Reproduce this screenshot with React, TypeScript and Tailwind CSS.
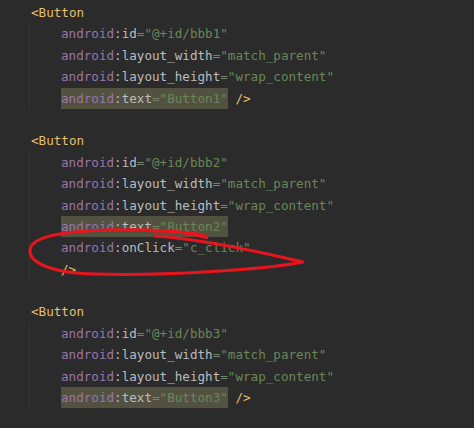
import React from "react";

type Attr = { name: string; value?: string; mark?: boolean; close?: "inline" | "next" };

const mono = { fontFamily: '"DejaVu Sans Mono", "Liberation Mono", monospace' };

function AttrLine({ a }: { a: Attr }) {
    const body = (
        <>
            <span className="text-[#9876aa]">android</span>
            <span className="text-[#b9bcc0]">:{a.name}</span>
            <span className="text-[#76866c]">=</span>
            <span className="text-[#6a8759]">"{a.value}"</span>
        </>
    );
    return (
        <div className="h-[21.4px] leading-[21.4px] whitespace-pre">
            {a.mark ? <span className="inline-block bg-[#535240] h-[21.4px]">{body}</span> : body}
            {a.close === "inline" && <span className="text-[#e8bf6a]"> /&gt;</span>}
        </div>
    );
}

function Block({ id, n, onClick }: { id: string; n: number; onClick?: boolean }) {
    return (
        <div>
            <div className="h-[21.4px] leading-[21.4px] pl-[31px] text-[#e8bf6a]">&lt;Button</div>
            <div className="ml-[29px] border-l border-[#363636] pl-[31px]">
                <AttrLine a={{ name: "id", value: "@+id/" + id }} />
                <AttrLine a={{ name: "layout_width", value: "match_parent" }} />
                <AttrLine a={{ name: "layout_height", value: "wrap_content" }} />
                <AttrLine a={{ name: "text", value: "Button" + n, mark: true, close: onClick ? undefined : "inline" }} />
                {onClick && <AttrLine a={{ name: "onClick", value: "c_click" }} />}
                {onClick && <div className="h-[21.4px] leading-[21.4px] text-[#e8bf6a]">/&gt;</div>}
            </div>
        </div>
    );
}

export default function App() {
    return (
        <div className="relative w-[474px] h-[428px] bg-[#2b2b2b] overflow-hidden text-[12.6px] pt-[2px]" style={mono}>
            <Block id="bbb1" n={1} />
            <div className="h-[21.4px]"></div>
            <Block id="bbb2" n={2} onClick />
            <div className="h-[21.4px]"></div>
            <Block id="bbb3" n={3} />

            {/* hand drawn red ring */}
            <svg className="absolute left-0 top-0 pointer-events-none" width="474" height="428">
                <path
                    d="M155 236 C 190 238, 235 246, 303 262 C 262 270, 160 276, 95 274 C 52 273, 29 263, 30 250 C 31 238, 58 231, 110 230 C 150 229, 180 231, 205 235"
                    fill="none"
                    stroke="#e8141e"
                    strokeWidth="3"
                    strokeLinecap="round"
                    strokeLinejoin="round"
                />
                <path d="M150 231 C 170 231, 190 233, 207 238" fill="none" stroke="#e8141e" strokeWidth="2.4" strokeLinecap="round" />
            </svg>
        </div>
    );
}
